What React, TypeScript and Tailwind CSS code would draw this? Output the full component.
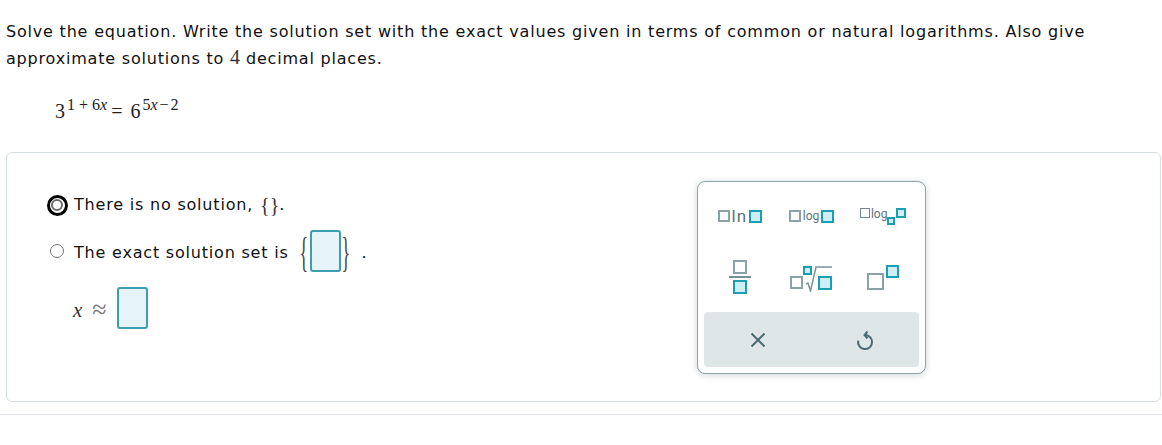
import { ReactNode } from 'react'

const GRAY = '#8ba1a8'
const TEAL = '#1b9db4'
const TEAL_FILL = '#cdeef4'

function GrayBox({ size }: { size: string }) {
  return <span className={`block ${size} border-2 border-[#8ba1a8] bg-white`} />
}

function TealBox({ size }: { size: string }) {
  return <span className={`block ${size} border-2 border-[#1b9db4] bg-[#cdeef4]`} />
}

function Key({ children }: { children: ReactNode }) {
  return <div className="flex items-center justify-center h-[62px]">{children}</div>
}

function FractionIcon() {
  return (
    <svg width="22" height="36" viewBox="0 0 22 36">
      <rect x="5" y="1" width="12" height="12" fill="white" stroke={GRAY} strokeWidth="2" />
      <line x1="0" y1="17" x2="22" y2="17" stroke="#7a939b" strokeWidth="2" />
      <rect x="5" y="21" width="12" height="12" fill={TEAL_FILL} stroke={TEAL} strokeWidth="2" />
    </svg>
  )
}

function SqrtIcon() {
  return (
    <svg width="44" height="27" viewBox="0 0 44 27">
      <rect x="2" y="12" width="11" height="11" fill="white" stroke={GRAY} strokeWidth="2" />
      <rect x="15" y="2" width="7" height="7" fill={TEAL_FILL} stroke={TEAL} strokeWidth="2" />
      <path d="M17 19 L19 18 L21.5 26 L27 2 L43 2" fill="none" stroke="#7a939b" strokeWidth="1.5" />
      <rect x="30" y="12" width="12" height="12" fill={TEAL_FILL} stroke={TEAL} strokeWidth="2" />
    </svg>
  )
}

function PowerIcon() {
  return (
    <svg width="33" height="26" viewBox="0 0 33 26">
      <rect x="1" y="9" width="15" height="15" fill="white" stroke={GRAY} strokeWidth="2" />
      <rect x="20" y="1" width="11" height="11" fill={TEAL_FILL} stroke={TEAL} strokeWidth="2" />
    </svg>
  )
}

function Palette() {
  return (
    <div className="w-[229px] h-[193px] mt-[28px] rounded-[8px] border border-[#8fa3a9] bg-white shadow-[0_1px_6px_rgba(60,80,90,0.25)] px-[6px] pt-[3px] flex flex-col">
      <div className="grid grid-cols-3">
        <Key>
          <div className="flex items-center">
            <GrayBox size="w-[12px] h-[12px]" />
            <span className="mx-[2px] font-['Roboto'] text-[17px] leading-none tracking-[1px] text-[#5a747c]">ln</span>
            <TealBox size="w-[13px] h-[13px]" />
          </div>
        </Key>
        <Key>
          <div className="flex items-center">
            <GrayBox size="w-[12px] h-[12px]" />
            <span className="mx-[2px] font-['Roboto'] text-[12px] leading-none tracking-normal text-[#5a747c]">log</span>
            <TealBox size="w-[13px] h-[13px]" />
          </div>
        </Key>
        <Key>
          <div className="flex items-start">
            <span className="block w-[10px] h-[10px] border-[1.5px] border-[#6f8a92] bg-white" />
            <span className="ml-[1px] font-['Roboto'] text-[12px] leading-[12px] tracking-normal text-[#5a747c]">log</span>
            <span className="block mt-[9px] w-[8px] h-[8px] border-2 border-[#1b9db4] bg-[#cdeef4]" />
            <span className="block ml-[1px] w-[10px] h-[10px] border-2 border-[#1b9db4] bg-[#cdeef4]" />
          </div>
        </Key>
        <Key>
          <FractionIcon />
        </Key>
        <Key>
          <SqrtIcon />
        </Key>
        <Key>
          <PowerIcon />
        </Key>
      </div>
      <div className="mt-[3px] h-[55px] rounded-[4px] bg-[#dfe6e8] grid grid-cols-2">
        <div className="flex items-center justify-center">
          <svg width="16" height="16" viewBox="0 0 16 16">
            <path d="M1.5 1.5 L14.5 14.5 M14.5 1.5 L1.5 14.5" stroke="#4b6b74" strokeWidth="2" fill="none" />
          </svg>
        </div>
        <div className="flex items-center justify-center">
          <svg width="18" height="22" viewBox="0 0 18 22">
            <path d="M9 6 A7 7 0 1 1 2.2 11.6" stroke="#4b6b74" strokeWidth="2" fill="none" />
            <path d="M11.5 2.5 L8.5 6 L11.5 9.5" stroke="#4b6b74" strokeWidth="2" fill="none" />
          </svg>
        </div>
      </div>
    </div>
  )
}

function AnswerBox() {
  return <span className="block w-[31px] h-[42px] rounded-[3px] border-2 border-[#3b9fb1] bg-[#e6f4f9]" />
}

export default function App() {
  return (
    <div className="w-[1162px] h-[445px] bg-white font-['DejaVu_Sans',Verdana,sans-serif] tracking-[0.8px] text-[#111] overflow-hidden">
      <div className="px-[6px] pt-[18px] text-[16px] leading-[27px] whitespace-nowrap">
        Solve the equation. Write the solution set with the exact values given in terms of common or natural logarithms. Also give
        <br />
        approximate solutions to{' '}
        <span className="font-['Liberation_Serif',serif] text-[20px] leading-none tracking-normal text-[#333]">4</span> decimal places.
      </div>

      <div className="mt-[27px] pl-[55px] h-[24px] font-['Liberation_Serif',serif] tracking-normal text-[20px] leading-[24px] text-[#222]">
        3
        <sup className="ml-[2px] text-[16px]">
          1<span className="mx-[4px]">+</span>6<i>x</i>
        </sup>
        <span className="ml-[4px] mr-[8px]">=</span>6
        <sup className="ml-[2px] text-[16px]">
          5<i>x</i>
          <span className="mx-[2px]">−</span>2
        </sup>
      </div>

      <div className="ml-[6px] mt-[29px] w-[1155px] h-[250px] rounded-[6px] border border-[#d5dee1] flex">
        <div className="w-[690px] pl-[39px] pt-[37px] text-[16px]">
          <div className="flex items-center h-[30px]">
            <span className="w-[22px] flex justify-center">
              <span className="w-[21px] h-[21px] rounded-full border-[3px] border-black flex items-center justify-center">
                <span className="w-[12px] h-[12px] rounded-full border-2 border-[#6b6b6b] bg-white" />
              </span>
            </span>
            <span className="ml-[6px]">There is no solution,</span>
            <span className="ml-[7px] font-['Liberation_Serif',serif] tracking-normal text-[20px] text-[#333]">{'{}'}</span>
            <span>.</span>
          </div>

          <div className="mt-[10px] flex items-center h-[42px]">
            <span className="w-[22px] flex justify-center">
              <span className="w-[14px] h-[14px] rounded-full border border-[#767676] bg-white" />
            </span>
            <span className="ml-[6px] mt-[4px]">The exact solution set is</span>
            <span className="ml-[11px] w-[9px] h-[42px] flex items-center justify-center font-['Liberation_Serif',serif] text-[20px] text-[#444]">
              <span className="inline-block scale-y-[2.1] scale-x-90">{'{'}</span>
            </span>
            <span className="ml-[1px]">
              <AnswerBox />
            </span>
            <span className="ml-[1px] w-[9px] h-[42px] flex items-center justify-center font-['Liberation_Serif',serif] text-[20px] text-[#444]">
              <span className="inline-block scale-y-[2.1] scale-x-90">{'}'}</span>
            </span>
            <span className="ml-[11px] mt-[3px]">.</span>
          </div>

          <div className="mt-[15px] pl-[27px] flex items-center h-[42px]">
            <span className="mt-[6px] font-['Liberation_Serif',serif] italic tracking-normal text-[21px] text-[#333]">x</span>
            <span className="ml-[10px] mt-[4px] font-['Liberation_Serif',serif] tracking-normal text-[26px] leading-none text-[#777]">≈</span>
            <span className="ml-[10px]">
              <AnswerBox />
            </span>
          </div>
        </div>
        <Palette />
      </div>

      <div className="mt-[12px] h-px bg-[#dfe5e8]" />
    </div>
  )
}
